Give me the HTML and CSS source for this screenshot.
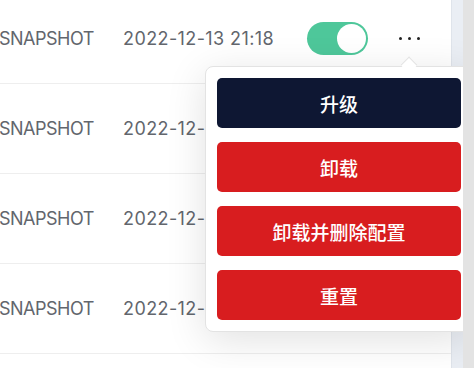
FILE: index.html
```html
<!DOCTYPE html>
<html lang="zh">
<head>
<meta charset="utf-8">
<link rel="stylesheet" href="styles.css">
</head>
<body>
<div class="page">
  <div class="main">
    <div class="table">
      <div class="row">
        <div class="cell version">SNAPSHOT</div>
        <div class="cell date">2022-12-13 21:18</div>
        <div class="cell"><span class="toggle"><span class="knob"></span></span></div>
        <div class="cell"><span class="dots"><i></i><i></i><i></i></span></div>
      </div>
      <div class="row">
        <div class="cell version">SNAPSHOT</div>
        <div class="cell date">2022-12-13 21:18</div>
        <div class="cell"><span class="toggle"><span class="knob"></span></span></div>
        <div class="cell"><span class="dots"><i></i><i></i><i></i></span></div>
      </div>
      <div class="row">
        <div class="cell version">SNAPSHOT</div>
        <div class="cell date">2022-12-13 21:18</div>
        <div class="cell"><span class="toggle"><span class="knob"></span></span></div>
        <div class="cell"><span class="dots"><i></i><i></i><i></i></span></div>
      </div>
      <div class="row">
        <div class="cell version">SNAPSHOT</div>
        <div class="cell date">2022-12-13 21:18</div>
        <div class="cell"><span class="toggle"><span class="knob"></span></span></div>
        <div class="cell"><span class="dots"><i></i><i></i><i></i></span></div>
      </div>
    </div>
    <div class="gutter"></div>
    <div class="popover">
      <span class="arrow"></span>
      <button class="btn dark">升级</button>
      <button class="btn red">卸载</button>
      <button class="btn red">卸载并删除配置</button>
      <button class="btn red">重置</button>
    </div>
  </div>
  <div class="scroll"></div>
</div>
</body>
</html>
```
FILE: styles.css
```css
* { box-sizing: border-box; }
html, body { margin: 0; padding: 0; }
body {
  width: 474px;
  height: 368px;
  overflow: hidden;
  background: #ffffff;
  font-family: Inter, "Noto Sans CJK SC", sans-serif;
}
.page {
  display: flex;
  width: 474px;
  height: 368px;
}
.main {
  position: relative;
  flex: none;
  width: 463px;
  height: 368px;
  overflow: hidden;
  display: flex;
}
.table {
  flex: none;
  width: 451px;
  margin-top: -6px;
  background: #fff;
}
.row {
  display: grid;
  grid-template-columns: 123px 184px 92px 1fr;
  align-items: center;
  height: 90px;
  border-bottom: 1px solid #eeeeee;
}
.cell {
  font-size: 18px;
  color: #62666d;
  white-space: nowrap;
}
.version {
  margin-left: -1px;
  letter-spacing: -0.5px;
}
.date { letter-spacing: 0.4px; }
.toggle {
  display: flex;
  align-items: center;
  justify-content: flex-end;
  width: 61px;
  height: 33px;
  border-radius: 17px;
  background: #4ec79a;
  padding: 2px;
}
.knob {
  width: 29px;
  height: 29px;
  border-radius: 50%;
  background: #fff;
}
.dots {
  display: flex;
  gap: 6px;
}
.dots i {
  width: 3px;
  height: 3px;
  border-radius: 50%;
  background: #222;
}
.gutter {
  flex: none;
  width: 12px;
  height: 368px;
  background: #eaeef4;
  border-left: 1px solid #dfe4eb;
}
.scroll {
  flex: none;
  width: 11px;
  height: 368px;
  background: #e3e3e3;
}
.popover {
  position: absolute;
  left: 205px;
  top: 66px;
  width: 268px;
  padding: 11px;
  background: #fff;
  border: 1px solid #e3e3e3;
  border-radius: 8px;
  box-shadow: 0 8px 40px rgba(0, 0, 0, 0.12);
  display: flex;
  flex-direction: column;
  gap: 14px;
}
.arrow {
  position: absolute;
  top: -8px;
  left: 197px;
  width: 12px;
  height: 12px;
  background: #fff;
  border-left: 1px solid #e3e3e3;
  border-top: 1px solid #e3e3e3;
  transform: rotate(45deg);
}
.btn {
  display: block;
  flex: none;
  width: 244px;
  height: 50px;
  border: none;
  border-radius: 5px;
  color: #fff;
  font-family: Inter, "Noto Sans CJK SC", sans-serif;
  font-size: 19px;
  font-weight: 500;
  padding: 0;
  cursor: pointer;
}
.dark { background: #0e1733; }
.red { background: #d81d1f; }
```
